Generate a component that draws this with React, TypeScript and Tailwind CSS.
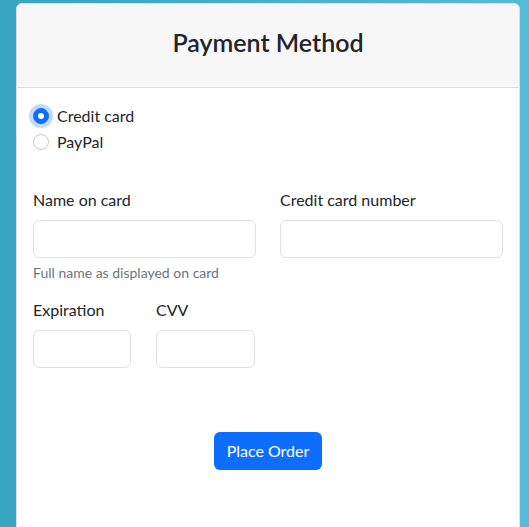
import React from 'react';

const font = { fontFamily: 'Lato, "Noto Sans", "Liberation Sans", sans-serif' };

const Radio = ({ checked, label }: { checked?: boolean; label: string }) => (
    <label className="flex items-center h-6 mb-[2px]">
        {checked ? (
            <span className="w-4 h-4 rounded-full bg-[#0d6efd] border border-[#0d6efd] flex items-center justify-center shadow-[0_0_0_4px_rgba(13,110,253,0.25)]">
                <span className="w-[6px] h-[6px] rounded-full bg-white"></span>
            </span>
        ) : (
            <span className="w-4 h-4 rounded-full bg-white border border-[#c5c9cd]"></span>
        )}
        <span className="ml-2 text-base text-[#212529]">{label}</span>
    </label>
);

const Field = ({ label, helper }: { label: string; helper?: string }) => (
    <div>
        <div className="text-base leading-6 text-[#212529] mb-2">{label}</div>
        <div className="h-[38px] rounded-[6px] border border-[#dee2e6] bg-white"></div>
        {helper && <div className="text-sm leading-[21px] mt-1 text-[#6c757d]">{helper}</div>}
    </div>
);

export default function App() {
    return (
        <div className="h-[527px] overflow-hidden bg-gradient-to-r from-[#37a5c1] to-[#55bbd4] pt-[3px] pl-4" style={font}>
            <div className="w-[504px] h-[560px] bg-white border border-[#dfdfdf] rounded-[6px] overflow-hidden">
                <div className="h-[84px] bg-[#f7f7f7] border-b border-[#dfdfdf] flex items-center justify-center">
                    <h3 className="text-[25px] leading-8 font-semibold text-[#212529] mb-2">Payment Method</h3>
                </div>
                <div className="px-4 pt-4">
                    <Radio checked label="Credit card" />
                    <Radio label="PayPal" />

                    <div className="grid grid-cols-2 gap-x-6 mt-[34px]">
                        <Field label="Name on card" helper="Full name as displayed on card" />
                        <Field label="Credit card number" />
                    </div>

                    <div className="grid grid-cols-[98px_99px] gap-x-[25px] mt-[15px]">
                        <Field label="Expiration" />
                        <Field label="CVV" />
                    </div>

                    <div className="flex justify-center mt-16">
                        <button className="h-[38px] px-[13px] rounded-[6px] bg-[#0d6efd] text-white text-base">
                            Place Order
                        </button>
                    </div>
                </div>
            </div>
        </div>
    );
}
